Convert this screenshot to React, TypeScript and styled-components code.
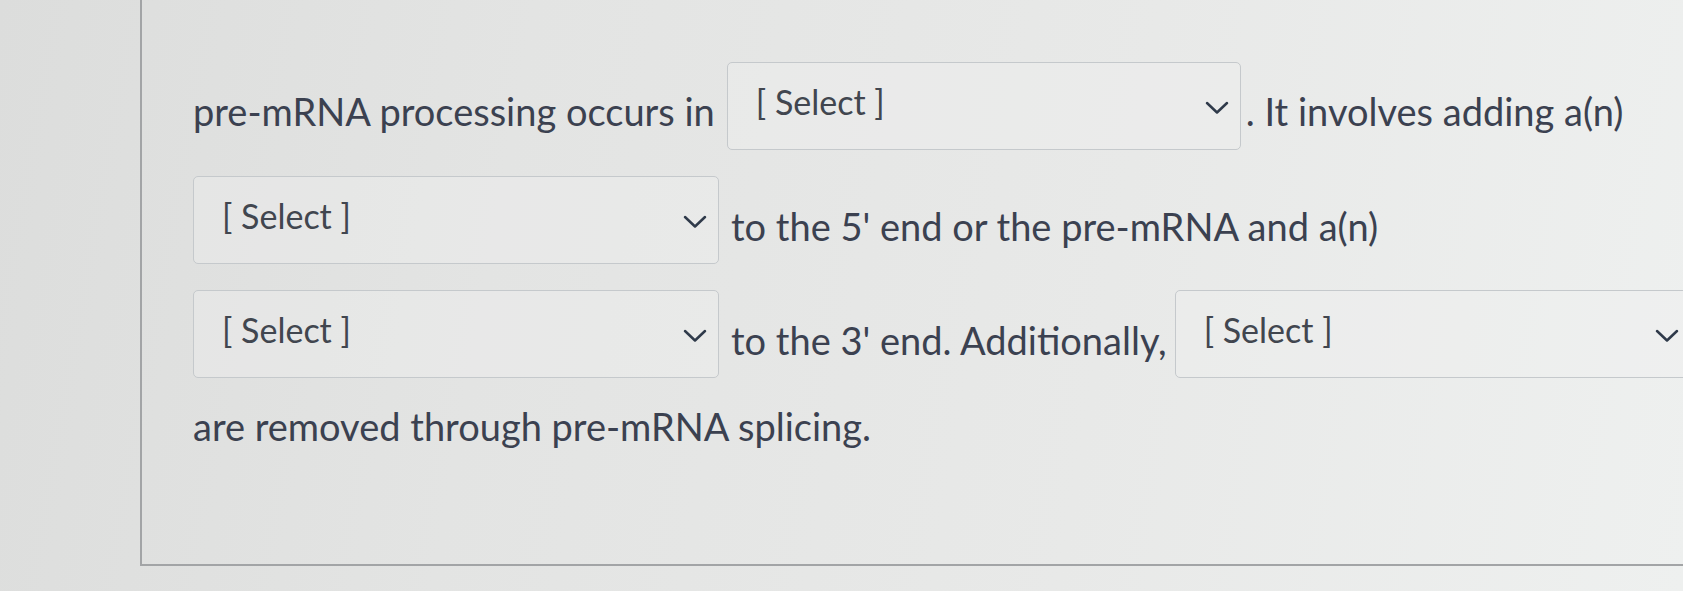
import styled, { createGlobalStyle } from "styled-components"

const GlobalStyle = createGlobalStyle`
  html, body {
    margin: 0;
    padding: 0;
    height: 100%;
    overflow: hidden;
  }
  body {
    background: linear-gradient(100deg, #dcdddc 0%, #e3e4e3 30%, #e8e9e8 65%, #eef0ef 100%);
    font-family: Lato, "Noto Sans", sans-serif;
    color: #3b4150;
  }
`

const Page = styled.div`
  width: 1683px;
  height: 591px;
  padding-left: 140px;
  box-sizing: border-box;
`

const Panel = styled.div`
  height: 566px;
  box-sizing: border-box;
  margin-right: -80px;
  border-left: 2px solid #a2a4a6;
  border-bottom: 2px solid #a2a4a6;
  padding: 62px 0 0 51px;
  display: flex;
  flex-direction: column;
  gap: 26px;
`

const Line = styled.div`
  display: flex;
  align-items: center;
  white-space: nowrap;
`

const Words = styled.span<{ $gap?: number; $top?: number }>`
  font-size: 38px;
  line-height: 44px;
  padding-top: ${p => p.$top ?? 0}px;
  margin-left: ${p => p.$gap ?? 0}px;
`

const SelectBox = styled.div<{ $width: number; $gap?: number }>`
  width: ${p => p.$width}px;
  height: 88px;
  flex: none;
  box-sizing: border-box;
  margin-left: ${p => p.$gap ?? 0}px;
  border: 1.5px solid #c5c9cc;
  border-radius: 5px;
  background: rgba(240, 241, 240, 0.35);
  display: flex;
  align-items: center;
  justify-content: space-between;
  padding: 0 10px 0 28px;
`

const SelectLabel = styled.span`
  font-size: 34px;
  line-height: 40px;
  margin-top: -8px;
  color: #41464f;
`

const Chevron = () => (
  <svg width="26" height="16" viewBox="0 0 26 16" fill="none" style={{ marginTop: 4 }}>
    <path d="M3 3 L13 12.5 L23 3" stroke="#2f3a4a" strokeWidth="2.5" strokeLinecap="round" strokeLinejoin="round" />
  </svg>
)

const Select = ({ width, gap }: { width: number; gap?: number }) => (
  <SelectBox $width={width} $gap={gap}>
    <SelectLabel>[ Select ]</SelectLabel>
    <Chevron />
  </SelectBox>
)

export default function App() {
  return (
    <>
      <GlobalStyle />
      <Page>
        <Panel>
          <Line>
            <Words $top={10}>pre-mRNA processing occurs in</Words>
            <Select width={514} gap={12} />
            <Words $gap={5} $top={10}>. It involves adding a(n)</Words>
          </Line>
          <Line>
            <Select width={526} />
            <Words $gap={12} $top={12}>to the 5' end or the pre-mRNA and a(n)</Words>
          </Line>
          <Line>
            <Select width={526} />
            <Words $gap={12} $top={12}>to the 3' end. Additionally,</Words>
            <Select width={516} gap={8} />
          </Line>
          <Line>
            <Words>are removed through pre-mRNA splicing.</Words>
          </Line>
        </Panel>
      </Page>
    </>
  )
}
